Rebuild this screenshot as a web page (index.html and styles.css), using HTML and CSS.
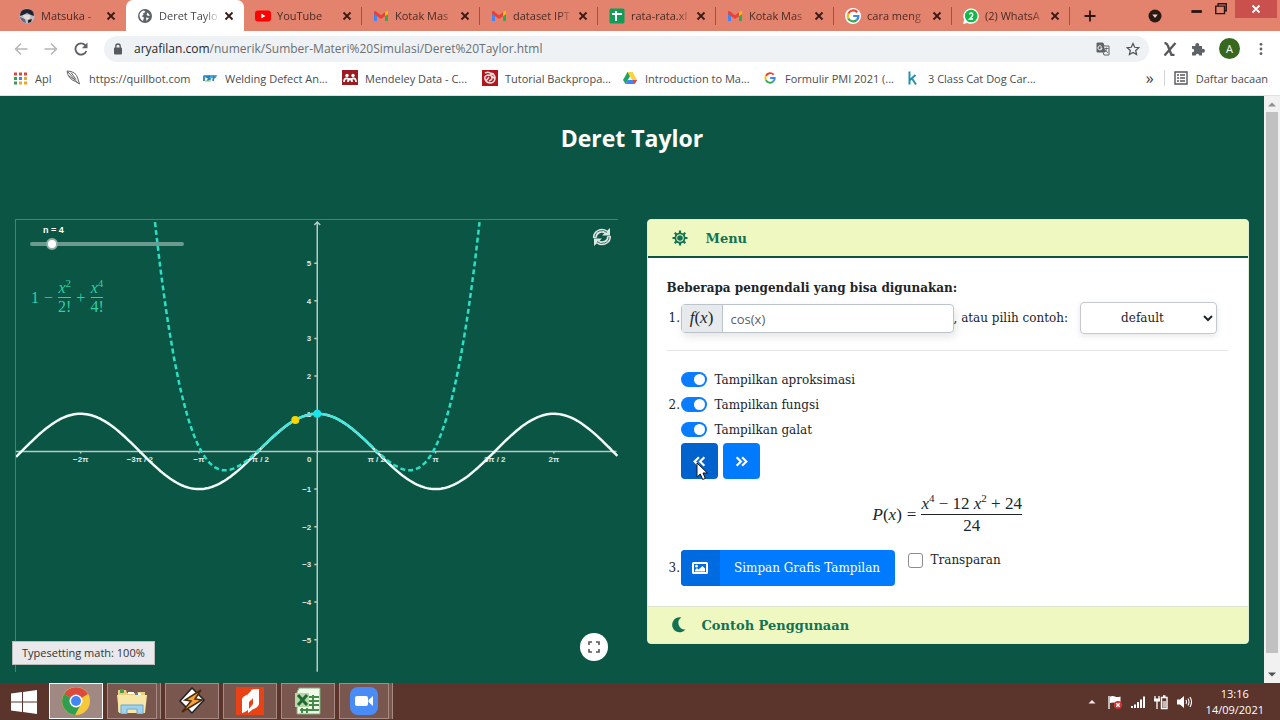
FILE: index.html
```html
<!DOCTYPE html>
<html lang="id">
<head>
    <meta charset="UTF-8">
    <meta name="viewport" content="width=device-width, initial-scale=1.0">
    <title>Deret Taylor</title>
    <link rel="stylesheet" href="styles.css">
</head>
<body>
    <!-- shared icons -->
    <svg class="defs" aria-hidden="true">
        <symbol id="close" viewBox="0 0 10 10"><path d="M1.500 1.500l7 7M8.500 1.500l-7 7" stroke="currentColor" stroke-width="1.800" fill="none"/></symbol>
        <symbol id="gmail" viewBox="0 0 16 16">
            <path d="M1 4v9h3V6z" fill="#4285f4"/><path d="M15 4v9h-3V6z" fill="#34a853"/>
            <path d="M12 4.500l1.500-1.400Q15 2.500 15 4.300V6l-3 2.200z" fill="#fbbc04"/>
            <path d="M1 6V4.300Q1 2.500 2.500 3.100L8 7.300l4-3v4L8 11 1 6z" fill="#ea4335"/>
        </symbol>
        <symbol id="google" viewBox="0 0 16 16">
            <path d="M12.200 4.200A5.400 5.400 0 0 0 3.300 5.600" stroke="#ea4335" stroke-width="2.200" fill="none"/>
            <path d="M3.300 5.600a5.400 5.400 0 0 0 0 4.800" stroke="#fbbc05" stroke-width="2.200" fill="none"/>
            <path d="M3.300 10.400a5.400 5.400 0 0 0 8.300 1.700" stroke="#34a853" stroke-width="2.200" fill="none"/>
            <path d="M11.600 12.100A5 5 0 0 0 13.400 8H8.200" stroke="#4285f4" stroke-width="2.200" fill="none"/>
        </symbol>
    </svg>

    <header class="tabs">
        <div class="tab">
            <svg class="icon" viewBox="0 0 16 16"><circle cx="8" cy="8" r="7.500" fill="#b9bcc6"/><path d="M1 8Q1 1 8 1t7 7l-3-1-4-2-4 2z" fill="#1f2430"/><path d="M4 7h7v3l-2 2-4-1z" fill="#e8d9d2"/><path d="M1 9l5 2 1 4Q2 14 1 9z" fill="#5f6a86"/><path d="M9 12l4-1-1 3-3 1z" fill="#222"/></svg>
            <span class="tab-title">Matsuka -</span>
            <button class="tab-close" aria-label="Tutup"><svg><use href="#close"/></svg></button>
        </div>
        <div class="tab active">
            <svg class="icon" viewBox="0 0 16 16"><circle cx="8" cy="8" r="7" fill="#5f6368"/><path d="M2.500 7Q3 3 7 2.500L8.500 4 6 5.500 6.500 7l-2 1 2.500 1.500L6 13Q2.500 11 2.500 7zM10.500 4.500l2.500 3-2 .500-1.500-1.500zM9 9.500l3 .500-2.500 3z" fill="#fff"/></svg>
            <span class="tab-title">Deret Taylo</span>
            <button class="tab-close" aria-label="Tutup"><svg><use href="#close"/></svg></button>
        </div>
        <div class="tab">
            <svg class="icon" viewBox="0 0 16 16"><rect x="0" y="2.500" width="16" height="11" rx="3" fill="#f00"/><path d="M6.300 5.500v5l4.200-2.500z" fill="#fff"/></svg>
            <span class="tab-title">YouTube</span>
            <button class="tab-close" aria-label="Tutup"><svg><use href="#close"/></svg></button>
        </div>
        <div class="tab">
            <svg class="icon"><use href="#gmail"/></svg>
            <span class="tab-title">Kotak Mas</span>
            <button class="tab-close" aria-label="Tutup"><svg><use href="#close"/></svg></button>
        </div>
        <div class="tab">
            <svg class="icon"><use href="#gmail"/></svg>
            <span class="tab-title">dataset IPT</span>
            <button class="tab-close" aria-label="Tutup"><svg><use href="#close"/></svg></button>
        </div>
        <div class="tab">
            <svg class="icon" viewBox="0 0 16 16"><rect x=".5" y=".5" width="15" height="15" rx="1.500" fill="#0f9d58"/><path d="M3 6h10M7 3v10" stroke="#fff" stroke-width="2"/></svg>
            <span class="tab-title">rata-rata.xl</span>
            <button class="tab-close" aria-label="Tutup"><svg><use href="#close"/></svg></button>
        </div>
        <div class="tab">
            <svg class="icon"><use href="#gmail"/></svg>
            <span class="tab-title">Kotak Mas</span>
            <button class="tab-close" aria-label="Tutup"><svg><use href="#close"/></svg></button>
        </div>
        <div class="tab">
            <svg class="icon round"><use href="#google"/></svg>
            <span class="tab-title">cara meng</span>
            <button class="tab-close" aria-label="Tutup"><svg><use href="#close"/></svg></button>
        </div>
        <div class="tab">
            <svg class="icon" viewBox="0 0 16 16"><path d="M0 16l1.200-4.300A7.700 7.700 0 1 1 4.500 15z" fill="#fff"/><circle cx="8.200" cy="8" r="6.300" fill="#12b84a"/><path d="M6.500 6.500Q6.700 5 8.200 5t1.600 1.500Q9.800 8 6.500 11h3.600" stroke="#fff" stroke-width="1.400" fill="none"/></svg>
            <span class="tab-title">(2) WhatsA</span>
            <button class="tab-close" aria-label="Tutup"><svg><use href="#close"/></svg></button>
        </div>
        <button class="new-tab" aria-label="Tab baru"><svg viewBox="0 0 12 12"><path d="M6 .5v11M.5 6h11" stroke="#2b1512" stroke-width="1.800"/></svg></button>
        <div class="window-buttons">
            <button class="tab-search" aria-label="Cari tab"><svg viewBox="0 0 14 14"><circle cx="7" cy="7" r="6.500" fill="#2b1a12"/><path d="M4.300 5.500h5.400L7 9z" fill="#f0cfc2"/></svg></button>
            <button class="minimize" aria-label="Kecilkan"><svg viewBox="0 0 10 10"><path d="M1 7.500h7.500" stroke="#2b1512" stroke-width="2"/></svg></button>
            <button class="restore" aria-label="Pulihkan"><svg viewBox="0 0 12 12"><path d="M3.500 3V1.500h7v6H9M1.500 3.500h7.500v6.500h-7.500z" stroke="#2b1512" stroke-width="1.200" fill="none"/></svg></button>
            <button class="window-close" aria-label="Tutup jendela"><svg><use href="#close"/></svg></button>
        </div>
    </header>

    <div class="toolbar">
        <button aria-label="Kembali" class="dim"><svg viewBox="0 0 14 14"><path d="M13.500 7H1.500M7 1.500L1.500 7 7 12.500" stroke="currentColor" stroke-width="1.500" fill="none"/></svg></button>
        <button aria-label="Maju" class="dim"><svg viewBox="0 0 14 14"><path d="M.5 7h12M7 1.500L12.500 7 7 12.500" stroke="currentColor" stroke-width="1.500" fill="none"/></svg></button>
        <button aria-label="Muat ulang"><svg viewBox="0 0 14 14"><path d="M12.300 9A5.600 5.600 0 1 1 11.300 3.300" stroke="currentColor" stroke-width="1.900" fill="none"/><path d="M13.500.5v5.700H7.800z" fill="currentColor"/></svg></button>
        <div class="address">
            <svg class="lock" viewBox="0 0 10 12"><rect x="1" y="4.500" width="8" height="7" rx="1" fill="#555a5f"/><path d="M2.800 5V3.200a2.200 2.200 0 0 1 4.400 0V5" stroke="#555a5f" stroke-width="1.300" fill="none"/></svg>
            <span class="url"><b>aryafilan.com</b>/numerik/Sumber-Materi%20Simulasi/Deret%20Taylor.html</span>
            <button aria-label="Terjemahkan"><svg viewBox="0 0 14 14"><path d="M1 1h6l1 3h5v9H8L7 10H1z" fill="none" stroke="#5f6368" stroke-width="1"/><path d="M1 1h6l2.500 9H1z" fill="#5f6368"/><path d="M5.500 4.500A2 2 0 1 0 6 6H4.300" stroke="#fff" fill="none"/><path d="M8.500 6.500h4M10.500 5.500v1q-.5 3-2 4M9.500 8l2.500 3" stroke="#5f6368" stroke-width=".9" fill="none"/></svg></button>
            <button aria-label="Tandai"><svg viewBox="0 0 14 14"><path d="M7 1.500l1.700 3.800 4.100.4-3.100 2.800.9 4L7 10.400l-3.600 2.100.9-4L1.200 5.700l4.100-.4z" fill="none" stroke="#4d5156" stroke-width="1.200"/></svg></button>
        </div>
        <div class="extensions">
            <button aria-label="Ekstensi X"><svg viewBox="0 0 14 14"><path d="M1.500 1q2.500 0 3.500 3l3.500 9h3M12.500 1L1.500 13.500" stroke="#56585c" stroke-width="2.300" fill="none"/></svg></button>
            <button aria-label="Ekstensi"><svg viewBox="0 0 14 14"><path d="M1 4h3.500a2 2 0 1 1 3.500 0h3v3a2 2 0 1 1 0 3.500V13.500H8.200a1.700 1.700 0 1 0-3.400 0H1v-3.300a1.700 1.700 0 1 0 0-3.300z" fill="#5f6368"/></svg></button>
            <button class="avatar">A</button>
            <button aria-label="Menu"><svg viewBox="0 0 14 14" fill="#5f6368"><circle cx="7" cy="2.300" r="1.400"/><circle cx="7" cy="7" r="1.400"/><circle cx="7" cy="11.700" r="1.400"/></svg></button>
        </div>
    </div>

    <nav class="bookmarks">
        <a href="#" class="apps"><svg class="icon" viewBox="0 0 16 16"><path d="M2 4h3M7 4h3M12 4h3" stroke="#d24a3c" stroke-width="3"/><path d="M2 8.500h3M2 13h3" stroke="#3a9a50" stroke-width="3"/><path d="M7 8.500h3" stroke="#4285f4" stroke-width="3"/><path d="M12 8.500h3M7 13h3M12 13h3" stroke="#e8a92a" stroke-width="3"/></svg>Apl</a>
        <a href="#" class="quill"><svg class="icon" viewBox="0 0 16 16"><path d="M1 1q9 0 11 8l1.500 5-4-2.500Q2 9 1 1zM2 2l10 11M5 2.500l5 7M3 6l6 4" fill="none" stroke="#666" stroke-width="1"/></svg>https://quillbot.com</a>
        <a href="#"><svg class="icon" viewBox="0 0 16 16"><path d="M1 5h14l-1 3H4z" fill="#45a6dd"/><path d="M2 6v5M8 6l-3 1 3 2-3 1.500M12 6l-1 5" stroke="#2385bd" stroke-width="1.800" fill="none"/><path d="M3 11h6" stroke="#8cc34b" stroke-width="1"/></svg>Welding Defect An...</a>
        <a href="#"><svg class="icon" viewBox="0 0 16 16"><rect width="16" height="15" fill="#9b1c22"/><circle cx="5" cy="5.500" r="1.700" fill="#fff"/><circle cx="11" cy="5.500" r="1.700" fill="#fff"/><path d="M2 12q0-4 3-3.500l3 1 3-1q3-.5 3 3.500M6 12q0-3 2-3t2 3" fill="none" stroke="#fff" stroke-width="1.800"/></svg>Mendeley Data - C...</a>
        <a href="#"><svg class="icon" viewBox="0 0 16 16"><rect width="16" height="16" fill="#b3151c"/><path d="M3 3q4-2 6 1 4 0 4 4 0 4-4 5-5 0-6-4Q2 6 6 5q4 0 4 3 0 2-3 3M8 3l4 1M4 11l3-4M10 6l3 3" fill="none" stroke="#f5dfdf" stroke-width="1.500"/></svg>Tutorial Backpropa...</a>
        <a href="#"><svg class="icon" viewBox="0 0 16 16"><path d="M5.500 2h5L8 6.300 3.500 14 1 10z" fill="#1fa463"/><path d="M5.500 2h5L15 10h-5z" fill="#fdd23a"/><path d="M5.500 10H15l-2.500 4h-9z" fill="#4285f4"/><path d="M11 10h4l-2.500 4z" fill="#ea4335"/></svg>Introduction to Ma...</a>
        <a href="#" class="wide"><svg class="icon small"><use href="#google"/></svg>Formulir PMI 2021 (...</a>
        <a href="#"><svg class="icon" viewBox="0 0 16 16"><path d="M4.500 1.500v13M10.500 5L5 10M7 8.500l4 6" stroke="#2791ad" stroke-width="2" fill="none"/></svg>3 Class Cat Dog Car...</a>
        <div class="reading">
            <button aria-label="Lainnya">»</button>
            <a href="#"><svg class="icon" viewBox="0 0 16 16"><path d="M2 2h12v12H2zM4 5h2M4 8h2M4 11h2M7 5h5M7 8h5M7 11h5" fill="none" stroke="#55585c" stroke-width="1.400"/></svg>Daftar bacaan</a>
        </div>
    </nav>

    <div class="viewport">
        <main class="page">
            <h1>Deret Taylor</h1>
            <div class="columns">
                <section class="graph">
                    <svg class="plot" id="plot" viewBox="0 0 603 453"></svg>
                    <div class="slider">
                        <label for="n">n = 4</label>
                        <input type="range" id="n" min="1" max="28" value="4">
                    </div>
                    <div class="formula graph-formula">
                        <span>1</span><span>−</span>
                        <span class="frac"><span><i>x</i><sup>2</sup></span><span>2!</span></span>
                        <span>+</span>
                        <span class="frac"><span><i>x</i><sup>4</sup></span><span>4!</span></span>
                    </div>
                    <button class="reset" aria-label="Ulangi"><svg viewBox="0 0 20 20"><g fill="none" stroke="#dce6e2" stroke-width="4"><path d="M3 11A7 6.500 0 0 1 14 5"/><path d="M17 9A7 6.500 0 0 1 6 15"/></g><path d="M18 1v7.500H10zM2 19v-7.500H10z" fill="#dce6e2"/><g fill="none" stroke="#47756a" stroke-width="1"><path d="M3 10A7 6.500 0 0 1 15 5.500"/><path d="M17 10A7 6.500 0 0 1 5 14.500"/></g></svg></button>
                    <button class="fullscreen" aria-label="Layar penuh"><svg viewBox="0 0 12 12"><path d="M1 4V1h3M8 1h3v3M11 8v3H8M4 11H1V8" fill="none" stroke="#555" stroke-width="1.600"/></svg></button>
                </section>

                <section class="panel">
                    <h2 class="panel-title">
                        <svg viewBox="0 0 16 16"><circle cx="8" cy="8" r="4.600" fill="none" stroke="currentColor" stroke-width="1.800"/><circle cx="8" cy="8" r="2.800" fill="currentColor"/><path d="M8 .5v3M8 12.500v3M.5 8h3M12.500 8h3M2.700 2.700l2 2M11.300 11.300l2 2M2.700 13.300l2-2M11.300 4.700l2-2" stroke="currentColor" stroke-width="2.200"/></svg>
                        Menu
                    </h2>
                    <div class="panel-body">
                        <p class="intro">Beberapa pengendali yang bisa digunakan:</p>
                        <div class="row function-row">
                            <span class="number">1.</span>
                            <div class="input-group">
                                <label for="fx"><i>f</i>(<i>x</i>)</label>
                                <input type="text" id="fx" value="cos(x)">
                            </div>
                            <label class="example" for="contoh">, atau pilih contoh:</label>
                            <select id="contoh"><option>default</option></select>
                        </div>
                        <hr>
                        <div class="row">
                            <span class="number">2.</span>
                            <div class="switches">
                                <label><input type="checkbox" class="switch" checked>Tampilkan aproksimasi</label>
                                <label><input type="checkbox" class="switch" checked>Tampilkan fungsi</label>
                                <label><input type="checkbox" class="switch" checked>Tampilkan galat</label>
                            </div>
                        </div>
                        <div class="steps">
                            <button class="btn pressed" aria-label="Sebelumnya">
                                <svg viewBox="0 0 12 10"><path d="M5.500 1l-4 4 4 4M10.500 1l-4 4 4 4" fill="none" stroke="#fff" stroke-width="2"/></svg>
                                <svg class="cursor" viewBox="0 0 12 19"><path d="M1 1v14l3.300-3 2.400 5.500 2.600-1.100L7 11h4.400z" fill="#fff" stroke="#111"/></svg>
                            </button>
                            <button class="btn" aria-label="Berikutnya"><svg viewBox="0 0 12 10"><path d="M1.500 1l4 4-4 4M6.500 1l4 4-4 4" fill="none" stroke="#fff" stroke-width="2"/></svg></button>
                        </div>
                        <div class="formula result">
                            <span><i>P</i>(<i>x</i>)</span><span>=</span>
                            <span class="frac"><span><i>x</i><sup>4</sup> − 12 <i>x</i><sup>2</sup> + 24</span><span>24</span></span>
                        </div>
                        <div class="row save-row">
                            <span class="number">3.</span>
                            <button class="save">
                                <span class="save-icon"><svg viewBox="0 0 16 12"><path fill-rule="evenodd" d="M1.500 0h13Q16 0 16 1.500v9q0 1.500-1.500 1.500h-13Q0 12 0 10.500v-9Q0 0 1.500 0zM2 2v8h12V2z" fill="#fff"/><circle cx="4.500" cy="4.200" r="1.400" fill="#fff"/><path d="M3 9.500V8l2-2 1.500 1.500L10.500 4 13 6.500v3z" fill="#fff"/></svg></span>
                                <span class="save-text">Simpan Grafis Tampilan</span>
                            </button>
                            <label class="transparent"><input type="checkbox">Transparan</label>
                        </div>
                    </div>
                    <h2 class="panel-title second">
                        <svg viewBox="0 0 16 16"><path d="M9.500.5A6.500 6.500 0 0 0 13.500 12.500 7.500 7.500 0 1 1 9.500.5z" fill="currentColor"/></svg>
                        Contoh Penggunaan
                    </h2>
                </section>
            </div>
            <div class="math-status">Typesetting math: 100%</div>
        </main>
        <div class="scrollbar">
            <svg viewBox="0 0 8 5"><path d="M0 4.500h8L4 .5z" fill="#909090"/></svg>
            <div class="thumb"></div>
            <svg viewBox="0 0 8 5"><path d="M0 .5h8l-4 4z" fill="#505050"/></svg>
        </div>
    </div>

    <footer class="taskbar">
        <button class="start" aria-label="Start"><svg viewBox="0 0 26 24"><path d="M0 3.500l11-1.500v9.500H0zM12 2l14-2v11.500H12zM0 12.500h11V22L0 20.500zM12 12.500h14V24l-14-2z" fill="#fff"/></svg></button>
        <button class="task current" aria-label="Chrome"><svg viewBox="0 0 28 28"><circle cx="14" cy="14" r="14" fill="#f6c83b"/><path d="M14 14L2 7A14 14 0 0 1 26 7H14z" fill="#db4a3c"/><path d="M2 7A14 14 0 0 0 13 28l6-11-5-3z" fill="#2f9e4f"/><path d="M14 7h12L14 14z" fill="#db4a3c"/><circle cx="14" cy="14" r="6.500" fill="#fff"/><circle cx="14" cy="14" r="5" fill="#4285f4"/></svg></button>
        <button class="task stacked" aria-label="Explorer"><svg class="folder" viewBox="0 0 30 26"><path d="M1 2h8l1 3h10l1-1h7v20H1z" fill="#e9cf7e"/><path d="M3 1h4v4H3z" fill="#4b9b4b"/><path d="M11 4h6v2h-6zM18 5h6v2h-6z" fill="#fff"/><path d="M18 5h3v2h-3z" fill="#3f86c5"/><path d="M0 7h30l-2 18H2z" fill="#f8e6a6"/><path d="M4 26v-9h22v9h-6v-5H10v5z" fill="#9fd2ee" stroke="#60a9d4"/></svg></button>
        <button class="task" aria-label="Winamp"><svg viewBox="0 0 28 28"><path d="M14 1l12 12-12 13L2 14z" fill="#fff" stroke="#222" stroke-width="1.500"/><path d="M23 3L7 13l6 1-9 11 20-12-7-1z" fill="#f5a133" stroke="#4a2a0c" stroke-width="1.500"/></svg></button>
        <button class="task" aria-label="Nitro"><svg viewBox="0 0 28 28"><rect width="28" height="28" fill="#e84217"/><path d="M6 12q1-3 7-5v13q0 4-7 6zM15 3q3-1 8-1v15q-1 4-8 6z" fill="#fff"/><path d="M12 7l4-4v9l-3 3zM12 26v-9l4-3v9z" fill="#fff"/><path d="M13 16l4-5v6l-4 5z" fill="#e84217"/></svg></button>
        <button class="task" aria-label="Excel"><svg viewBox="0 0 28 28"><path d="M5 1h21v26H3V5z" fill="#f1f8ec" stroke="#7cae72"/><path d="M1 6h14v14H1z" fill="#b7d9a7"/><path d="M4 8l9 10M13 8L4 18" stroke="#216a36" stroke-width="3"/><path d="M15 10h10M15 14h10M15 18h10M6 23h19M19 8v16M8 21v5M13 21v5" stroke="#438b46" stroke-width="2"/></svg></button>
        <button class="task stacked" aria-label="Zoom"><svg viewBox="0 0 28 28"><rect width="28" height="28" rx="8" fill="#4a8cf7"/><rect x="5" y="9" width="13" height="10" rx="2" fill="#fff"/><path d="M18.500 13l4.500-4v10l-4.500-4z" fill="#fff"/></svg></button>
        <div class="tray">
            <svg viewBox="0 0 16 16"><path d="M4.500 9.500h7L8 6z" fill="#f3e9e6"/></svg>
            <svg viewBox="0 0 16 16"><path d="M2 2v13" stroke="#fff" stroke-width="1.300"/><path d="M3 2.500q3-1 5 0t5.500 0V9q-3 1-5 0T3 9z" fill="#fff"/><circle cx="11" cy="11" r="4" fill="#d53131"/><path d="M9.300 9.300l3.400 3.400M12.700 9.300l-3.400 3.400" stroke="#fff" stroke-width="1.400"/></svg>
            <svg viewBox="0 0 16 16"><path d="M2 12v2M5 10.500V14M8 8v6M11 5.500V14M14 2.500V14" stroke="#fff" stroke-width="2"/></svg>
            <svg viewBox="0 0 16 16"><path d="M8.500 3.500h5.500v11H8.500zM10 2h2.500" fill="none" stroke="#fff" stroke-width="1.400"/><path d="M9.500 7h3.500v6.500H9.500z" fill="#c9b8b4"/><path d="M4 7v8M2 2v3M6 2v3" stroke="#fff" stroke-width="1.300"/><path d="M1 4.500h6v3H1z" fill="#fff"/></svg>
            <svg viewBox="0 0 16 16"><path d="M1 5.500h3L8 2v12l-4-3.500H1z" fill="#fff"/><path d="M10 6q1 2 0 4M12 4.500q2 3.500 0 7M14 3q3 5 0 10" fill="none" stroke="#fff" stroke-width="1.100"/></svg>
            <div class="clock">13:16<br>14/09/2021</div>
        </div>
    </footer>
    <script src="plot.js"></script>
</body>
</html>
```
FILE: styles.css
```css
* {
    box-sizing: border-box;
}
body {
    margin: 0;
    height: 100vh;
    display: flex;
    flex-direction: column;
    overflow: hidden;
    font-family: "Open Sans", "Noto Sans", sans-serif;
    font-size: 11px;
    color: #3c4043;
    background: #fff;
}
button {
    border: 0;
    padding: 0;
    background: none;
    font: inherit;
    color: inherit;
}
svg {
    display: block;
    flex: none;
}
.defs {
    position: absolute;
    width: 0;
    height: 0;
}
.icon {
    width: 16px;
    height: 16px;
}
.round {
    background: #fff;
    border-radius: 50%;
}
.small {
    padding: 1px;
}

/* browser tabs */
.tabs {
    display: flex;
    height: 31px;
    flex: none;
    padding-left: 8px;
    background: #e3836e;
    color: #4a2a24;
}
.tab {
    display: flex;
    align-items: center;
    width: 118px;
    padding: 0 10px 0 11px;
    position: relative;
}
.tab::after {
    content: "";
    position: absolute;
    right: 0;
    top: 7px;
    height: 18px;
    border-right: 1px solid #9c5445;
}
.tab:first-child::after, .tab.active::after {
    display: none;
}
.tab.active {
    background: #fff;
    border-radius: 7px 7px 0 0;
    color: #45484c;
}
.tab-title {
    flex: 1;
    margin: 0 4px 0 6px;
    overflow: hidden;
    white-space: nowrap;
    -webkit-mask-image: linear-gradient(to right, #000 75%, transparent);
    mask-image: linear-gradient(to right, #000 75%, transparent);
}
.tab-close svg, .window-close svg {
    width: 10px;
    height: 10px;
}
.tab-close {
    color: #3a1a15;
}
.new-tab svg {
    width: 12px;
    height: 12px;
    margin-left: 14px;
}
.window-buttons {
    display: flex;
    align-items: flex-start;
    margin-left: auto;
}
.window-buttons svg {
    width: 14px;
    height: 14px;
}
.tab-search {
    padding: 9px 28px 0 0;
}
.minimize {
    padding: 1px 10px 0 0;
}
.restore {
    padding: 2px 7px 0 0;
}
.window-close {
    display: flex;
    align-items: center;
    justify-content: center;
    width: 42px;
    height: 18px;
    margin-right: 3px;
    background: #c9504d;
    color: #fff;
}
.window-buttons .window-close svg {
    width: 10px;
    height: 10px;
}

/* toolbar */
.toolbar {
    display: flex;
    align-items: center;
    height: 35px;
    flex: none;
    padding: 0 12px 0 14px;
    color: #5f6368;
}
.toolbar > button {
    margin-right: 16px;
}
.toolbar svg {
    width: 14px;
    height: 14px;
}
.toolbar .dim {
    color: #b4b6b8;
}
.address {
    flex: 1;
    display: flex;
    align-items: center;
    gap: 16px;
    height: 26px;
    padding: 0 9px;
    border-radius: 13px;
    background: #eff2f4;
}
.address .lock {
    width: 10px;
    height: 12px;
}
.url {
    flex: 1;
    margin-left: -5px;
    font-size: 12px;
    color: #6b6f73;
}
.url b {
    font-weight: normal;
    color: #26282b;
}
.extensions {
    display: flex;
    align-items: center;
    gap: 14px;
    margin-left: 14px;
}
.avatar {
    width: 21px;
    height: 21px;
    border-radius: 50%;
    background: #38671f;
    color: #fff;
    font-size: 11px;
}

/* bookmarks */
.bookmarks {
    display: flex;
    align-items: center;
    height: 30px;
    flex: none;
    padding: 0 12px 5px;
    border-bottom: 1px solid #dfe1e3;
}
.bookmarks a {
    display: flex;
    align-items: center;
    gap: 7px;
    width: 140px;
    color: #4a4d50;
    text-decoration: none;
    white-space: nowrap;
}
.bookmarks .apps {
    width: 54px;
}
.bookmarks .quill {
    width: 136px;
}
.bookmarks .wide {
    width: 143px;
}
.reading {
    display: flex;
    align-items: center;
    gap: 10px;
    margin-left: auto;
}
.reading button {
    font-size: 16px;
    line-height: 18px;
}
.bookmarks .reading a {
    width: auto;
    padding-left: 8px;
    border-left: 1px solid #d5d7d9;
}

/* page */
.viewport {
    flex: 1;
    min-height: 0;
    display: flex;
    background: #0b5545;
}
.page {
    flex: 1;
    min-width: 0;
    padding: 0 15px;
    position: relative;
    font-family: "DejaVu Serif", serif;
    font-size: 12px;
    color: #212529;
}
h1 {
    margin: 24px 0 63px;
    font: 700 23px/36px "Open Sans", sans-serif;
    text-align: center;
    color: #fff;
}
.columns {
    display: grid;
    grid-template-columns: 1fr 1fr;
    gap: 29px;
    align-items: start;
}

/* graph */
.graph {
    position: relative;
}
.plot {
    width: 100%;
    border-top: 1px solid #4a8074;
    border-left: 1px solid #4a8074;
    font: bold 8px "Liberation Sans", sans-serif;
}
.axis {
    fill: none;
    stroke: #b5cbc5;
    stroke-width: 1.5;
}
.tick-label {
    fill: #dcebe6;
}
.function {
    fill: none;
    stroke: #f3fbf8;
    stroke-width: 2.5;
}
.near {
    fill: none;
    stroke: #45e8e0;
    stroke-width: 2;
}
.taylor {
    fill: none;
    stroke: #2be0c6;
    stroke-width: 2.5;
    stroke-dasharray: 5 3;
}
.slider {
    position: absolute;
    left: 15px;
    top: 4px;
    width: 154px;
}
.slider label {
    display: block;
    padding-left: 13px;
    font: bold 9px/14px "Liberation Sans", sans-serif;
    color: #fff;
}
.slider input {
    display: block;
    appearance: none;
    width: 100%;
    height: 4px;
    margin: 5px 0 0;
    border-radius: 2px;
    background: #6c9a8f;
}
.slider input::-webkit-slider-thumb {
    appearance: none;
    width: 12px;
    height: 12px;
    border: 2px solid #8fb1a8;
    border-radius: 50%;
    background: #fff;
}
.formula {
    display: flex;
    align-items: center;
    gap: 5px;
    font-family: "Liberation Serif", serif;
    white-space: nowrap;
}
.frac {
    display: flex;
    flex-direction: column;
    align-items: center;
}
.frac > span:first-child {
    border-bottom: 1px solid currentColor;
}
.formula sup {
    font-size: 11px;
    line-height: 1px;
}
.graph-formula {
    position: absolute;
    left: 16px;
    top: 60px;
    font-size: 16px;
    line-height: 18px;
    color: #2fd0a6;
}
.reset {
    position: absolute;
    right: 6px;
    top: 8px;
}
.reset svg {
    width: 20px;
    height: 20px;
}
.fullscreen {
    position: absolute;
    right: 10px;
    bottom: 11px;
    display: flex;
    align-items: center;
    justify-content: center;
    width: 28px;
    height: 28px;
    border-radius: 50%;
    background: #fff;
}
.fullscreen svg {
    width: 12px;
    height: 12px;
}

/* menu panel */
.panel {
    overflow: hidden;
    border: 1px solid #e3ecd5;
    border-radius: 4px;
    background: #fff;
}
.panel-title {
    display: flex;
    align-items: center;
    gap: 18px;
    height: 38px;
    margin: 0;
    padding: 0 24px;
    border-bottom: 2px solid #0b5545;
    background: #f0f8c2;
    color: #127252;
    font-size: 13px;
}
.panel-title.second {
    gap: 14px;
    height: 37px;
    border-top: 1px solid #dfe6cf;
    border-bottom: 0;
}
.panel-title svg {
    width: 16px;
    height: 16px;
}
.panel-body {
    padding: 20px 20px 20px 19px;
}
.intro {
    margin: 0 0 4px;
    font-weight: bold;
    line-height: 20px;
}
.row {
    display: flex;
    align-items: center;
}
.number {
    width: 14px;
    padding-left: 2px;
}
.input-group {
    display: flex;
    width: 273px;
    height: 29px;
    border: 1px solid #bcc4cb;
    border-radius: 4px;
    box-shadow: 2px 4px 8px rgba(0, 0, 0, 0.1);
}
.input-group label {
    width: 41px;
    border-right: 1px solid #bcc4cb;
    background: #e6eaed;
    font: 17px/26px "Liberation Serif", serif;
    text-align: center;
}
.input-group input {
    flex: 1;
    min-width: 0;
    padding: 2px 8px 0;
    border: 0;
    background: none;
    font: 13px "Open Sans", sans-serif;
    color: #5a6066;
}
.example {
    flex: 1;
    white-space: nowrap;
}
select {
    width: 137px;
    height: 32px;
    margin-right: 11px;
    border: 1px solid #c5c9cd;
    border-radius: 4px;
    background: #fff;
    box-shadow: 0 2px 6px rgba(0, 0, 0, 0.1);
    color: #212529;
    font: 12px "DejaVu Serif", serif;
    text-align: center;
    text-align-last: center;
}
hr {
    margin: 16px 0;
    border: 0;
    border-top: 1px solid #e2e4e6;
}
.switches label {
    display: flex;
    align-items: center;
    gap: 8px;
    height: 25px;
}
.switch {
    appearance: none;
    width: 26px;
    height: 15px;
    margin: 0;
    border-radius: 8px;
    background: #0a7cff;
}
.switch::before {
    content: "";
    display: block;
    width: 11px;
    height: 11px;
    margin: 2px 2px 2px 13px;
    border-radius: 50%;
    background: #fff;
}
.steps {
    display: flex;
    gap: 5px;
    margin: 1px 0 0 14px;
}
.btn {
    display: flex;
    align-items: center;
    justify-content: center;
    position: relative;
    width: 37px;
    height: 36px;
    border-radius: 4px;
    background: #007bff;
}
.btn svg {
    width: 13px;
    height: 11px;
}
.btn.pressed {
    background: #0062cc;
}
.btn .cursor {
    position: absolute;
    left: 15px;
    top: 19px;
    width: 12px;
    height: 19px;
}
.result {
    justify-content: center;
    margin: 14px 0;
    font-size: 17px;
    line-height: 21px;
}
.save {
    display: flex;
    width: 214px;
    height: 36px;
    overflow: hidden;
    border-radius: 4px;
    background: #007bff;
    color: #fff;
    line-height: 36px;
}
.save-icon {
    display: flex;
    align-items: center;
    justify-content: center;
    width: 39px;
    background: #006ae0;
}
.save-icon svg {
    width: 16px;
    height: 12px;
}
.save-text {
    flex: 1;
}
.transparent {
    display: flex;
    align-items: center;
    align-self: flex-start;
    gap: 8px;
    height: 20px;
    margin-left: 13px;
}
.transparent input {
    appearance: none;
    width: 15px;
    height: 15px;
    margin: 0;
    border: 1px solid #8c8c8c;
    border-radius: 3px;
}
.math-status {
    position: absolute;
    left: 12px;
    bottom: 18px;
    padding: 0 9px;
    border: 1px solid #b8bcbb;
    background: #e9e9eb;
    color: #333;
    font: 11px/22px "Open Sans", sans-serif;
}
.scrollbar {
    display: flex;
    flex-direction: column;
    align-items: center;
    gap: 5px;
    width: 16px;
    padding: 6px 0;
    background: #f1f1f1;
}
.scrollbar svg {
    width: 8px;
    height: 5px;
}
.thumb {
    width: 12px;
    flex: 1;
    margin-bottom: 14px;
    background: #c1c1c1;
}

/* taskbar */
.taskbar {
    display: flex;
    gap: 4px;
    height: 37px;
    flex: none;
    background: #5b342c;
    color: #fff;
}
.start {
    width: 45px;
    padding-left: 11px;
}
.start svg {
    width: 26px;
    height: 24px;
}
.task {
    display: flex;
    align-items: center;
    justify-content: center;
    width: 54px;
    height: 36px;
    border: 1px solid #a88a84;
    background: #79574f;
}
.task svg {
    width: 28px;
    height: 28px;
}
.task .folder {
    width: 30px;
    height: 26px;
}
.task.current {
    border-color: #fff;
    background: #a18983;
}
.task.stacked {
    width: 50px;
    margin-right: 4px;
    box-shadow: 3px 0 #79574f, 4px 0 #a88a84;
}
.tray {
    display: flex;
    align-items: center;
    gap: 7px;
    margin-left: auto;
    padding-right: 16px;
}
.tray svg {
    width: 16px;
    height: 16px;
}
.clock {
    margin-left: 7px;
    font-size: 11px;
    line-height: 16px;
    text-align: center;
}
```
FILE: plot.js
```javascript
const plot = document.getElementById('plot');
const X0 = 302;
const Y0 = 232;
const UNIT = 37.75;

function add(tag, attrs, text) {
    const el = document.createElementNS('http://www.w3.org/2000/svg', tag);
    for (const key in attrs) el.setAttribute(key, attrs[key]);
    if (text) el.textContent = text;
    plot.appendChild(el);
}

function curve(f, from, to, name) {
    const points = [];
    const steps = 300;
    for (let i = 0; i <= steps; i++) {
        const x = from + (to - from) * i / steps;
        points.push((X0 + x * UNIT).toFixed(1) + ',' + (Y0 - f(x) * UNIT).toFixed(1));
    }
    add('polyline', { points: points.join(' '), class: name });
}

// axes with ticks
let axes = `M0 ${Y0}H602M${X0} 2V453M${X0 - 3} 5l3-3 3 3`;
for (let y = -5; y <= 5; y++) axes += `M${X0 - 3} ${Y0 - y * UNIT}h3`;
for (let k = -4; k <= 4; k++) axes += `M${X0 + k * Math.PI / 2 * UNIT} ${Y0}v2`;
add('path', { d: axes, class: 'axis' });

for (let y = -5; y <= 5; y++) {
    if (y === 0) continue;
    add('text', { x: X0 - 6, y: Y0 - y * UNIT + 3, 'text-anchor': 'end', class: 'tick-label' }, String(y).replace('-', '−'));
}
const labels = ['−2π', '−3π / 2', '−π', '−π / 2', '0', 'π / 2', 'π', '3π / 2', '2π'];
labels.forEach((label, i) => {
    const x = X0 + (i - 4) * Math.PI / 2 * UNIT;
    add('text', { x: label === '0' ? x - 8 : x, y: Y0 + 11, 'text-anchor': 'middle', class: 'tick-label' }, label);
});

// cos(x) and its fourth order series
const taylor = x => 1 - x ** 2 / 2 + x ** 4 / 24;
curve(Math.cos, -8, 7.97, 'function');
curve(taylor, -4.31, 4.31, 'taylor');
curve(taylor, -1.5, 1.5, 'near');

add('circle', { cx: X0 - 22, cy: Y0 - 31.5, r: 4, fill: '#f5d800' });
add('circle', { cx: X0, cy: Y0 - UNIT, r: 4, fill: '#18e5ee' });
```
